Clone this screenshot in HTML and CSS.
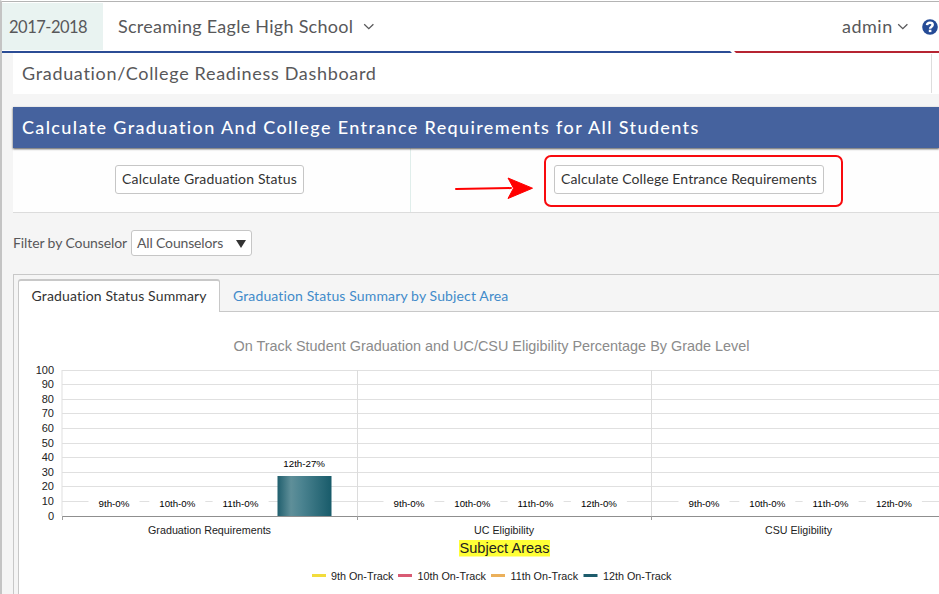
FILE: index.html
```
<!DOCTYPE html>
<html lang="en">
<head>
<meta charset="utf-8">
<title>Graduation/College Readiness Dashboard</title>
<link rel="stylesheet" href="styles.css">
</head>
<body>
<div class="app">
  <header class="topbar">
    <div class="year">2017-2018</div>
    <div class="school">Screaming Eagle High School</div>
    <svg class="chev" width="12" height="8" viewBox="0 0 12 8"><path d="M1.2 1.2 5.8 5.7 10.4 1.2"/></svg>
    <div class="user">admin</div>
    <svg class="chev user-chev" width="12" height="8" viewBox="0 0 12 8"><path d="M1.2 1.2 5.8 5.7 10.4 1.2"/></svg>
    <svg class="help" width="16" height="16" viewBox="0 0 16 16"><circle cx="8" cy="8" r="7.8" fill="#254b96"/><path d="M5 6.2C5.2 4.3 6.4 3.7 8 3.7c1.6 0 2.7.8 2.7 2.1C10.7 7.7 8.1 7.6 8.1 9.7" fill="none" stroke="#fff" stroke-width="2.5"/><rect x="6.8" y="10.7" width="2.6" height="2.4" fill="#fff"/></svg>
  </header>
  <div class="stripe"><i class="blue"></i><i class="red"></i></div>
  <main class="page">
    <div class="titlebar"><h1>Graduation/College Readiness Dashboard</h1><div class="side"></div></div>
    <h2 class="banner">Calculate Graduation And College Entrance Requirements for All Students</h2>
    <div class="actions">
      <div class="cell first"><button class="btn status">Calculate Graduation Status</button></div>
      <div class="cell second">
        <svg class="arrow" width="80" height="24" viewBox="0 0 80 24"><path d="M1 12.9 56 12.1" stroke="#f00" stroke-width="2" stroke-linecap="round"/><path d="M53 2 77.5 12.2 53 22.5 58.5 12.2Z" fill="#f00" stroke="#f00" stroke-linejoin="round"/></svg>
        <div class="callout"><button class="btn college">Calculate College Entrance Requirements</button></div>
      </div>
    </div>
    <div class="filter"><span class="filter-label">Filter by Counselor</span><div class="select"><span>All Counselors</span><i class="caret"></i></div></div>
    <section class="tabs">
      <nav class="tablist"><a class="tab active">Graduation Status Summary</a><a class="tab link">Graduation Status Summary by Subject Area</a></nav>
      <div class="panel"><svg id="chart" class="chart" width="920" height="282" viewBox="19 312 920 282"></svg></div>
    </section>
  </main>
</div>
<script src="chart.js"></script>
</body>
</html>
```
FILE: chart.js
```
const svg = document.getElementById("chart");
const NS = "http://www.w3.org/2000/svg";

function add(tag, attrs, text) {
  const el = document.createElementNS(NS, tag);
  for (const key in attrs) el.setAttribute(key, attrs[key]);
  if (text) el.textContent = text;
  svg.appendChild(el);
  return el;
}

// Text fitted to a horizontal span
function label(text, x1, x2, y, cls) {
  add("text", { x: x1, y: y, textLength: x2 - x1, lengthAdjust: "spacingAndGlyphs", class: cls }, text);
}

function line(x, y, w, h, fill) {
  add("rect", { x: x, y: y, width: w, height: h, fill: fill });
}

const defs = add("defs", {});
defs.innerHTML = '<linearGradient id="bar"><stop offset="0" stop-color="#205f6e"/><stop offset=".25" stop-color="#5f8f99"/><stop offset=".45" stop-color="#4b8390"/><stop offset="1" stop-color="#185b6a"/></linearGradient>';

label("On Track Student Graduation and UC/CSU Eligibility Percentage By Grade Level", 233.5, 749.5, 351, "title");

const rows = [370, 384, 399, 413, 428, 443, 457, 472, 486, 501];
rows.forEach((y, i) => {
  line(62, y, 877, 1, "#e0e0e0");
  add("text", { x: 54, y: y + 4, class: "axis end" }, String(100 - i * 10));
});
add("text", { x: 54, y: 520, class: "axis end" }, "0");

line(61.5, 370, 1, 146, "#e0e0e0");
[357, 651].forEach(x => line(x, 370, 1, 146, "#dcdcdc"));

[62, 357, 652].forEach((left, g) => {
  ["9th", "10th", "11th", "12th"].forEach((grade, i) => {
    const cx = left + 52 + i * 63.3;
    const half = i === 0 ? 15.5 : 18;
    if (g === 0 && i === 3) {
      line(278, 458, 52, 11, "#fff");
      add("rect", { x: 277.5, y: 476, width: 54, height: 40, fill: "url(#bar)" });
      label("12th-27%", 283.3, 325, 467, "data");
    } else {
      line(cx - half - 10, 498, half * 2 + 20, 10, "#fff");
      label(grade + "-0%", cx - half, cx + half, 507, "data");
    }
  });
});

line(62, 516, 877, 1, "#8f8f8f");
[62, 357, 651].forEach(x => line(x, 516, 1, 4, "#a0a0a0"));

label("Graduation Requirements", 148, 271, 534, "axis");
label("UC Eligibility", 474, 534, 534, "axis");
label("CSU Eligibility", 765, 832, 534, "axis");

add("rect", { x: 459, y: 540, width: 91, height: 16.5, fill: "#ffff36" });
label("Subject Areas", 459.5, 549.5, 553, "subject");

[["#f2dc3c", 312, "9th On-Track", 331, 393.5],
 ["#d95b74", 398, "10th On-Track", 417.5, 486],
 ["#ebb05b", 491, "11th On-Track", 510.5, 578],
 ["#1d5c6c", 583.5, "12th On-Track", 603, 671.5]].forEach(([color, x, text, a, b]) => {
  line(x, 574, 14, 3, color);
  label(text, a, b, 580, "axis");
});
```
FILE: styles.css
```
* { box-sizing: border-box; }
body { margin: 0; background: #f5f5f5; font-family: Lato, "Open Sans", sans-serif; color: #58585a; overflow: hidden; }
.app { height: 594px; border-left: 2px solid #c4c4c4; border-top: 1px solid #fff; overflow: hidden; }
.topbar { height: 50px; border-top: 1px solid #b4b4b4; background: #fff; display: flex; align-items: center; font-size: 18px; white-space: nowrap; }
.year { width: 101px; height: 47px; line-height: 48px; padding-left: 7px; background: #e9f3f1; font-size: 16.5px; letter-spacing: -.5px; align-self: flex-start; margin-top: 1px; }
.school { margin-left: 15px; width: 245px; padding-bottom: 2px; letter-spacing: .27px; }
.chev { fill: none; stroke: #58585a; stroke-width: 1.3; flex: none; }
.user { margin-left: 467px; width: 54px; padding-bottom: 2px; letter-spacing: .5px; }
.user-chev { margin-left: 1px; }
.help { margin-left: 13px; flex: none; }
.stripe { height: 2px; background: #fff; display: flex; gap: 2px; }
.blue { width: 730px; background: #2b4c95; clip-path: polygon(0 0, 728px 0, 100% 100%, 0 100%); }
.red { flex: 1; background: #b62431; clip-path: polygon(0 0, 100% 0, 100% 100%, 2px 100%); }
.page { padding-left: 11px; }
.titlebar { height: 41px; background: #fff; display: flex; }
h1 { margin: 0; padding-left: 9px; width: 918px; font-size: 18px; font-weight: 400; line-height: 41px; letter-spacing: .68px; }
.side { height: 39px; margin-top: 1px; border-left: 1px solid #ddd; }
.banner { position: relative; margin: 13px 0 0; height: 41px; padding-left: 9px; background: #45629e; color: #fff; font-size: 18px; font-weight: 500; line-height: 40px; letter-spacing: 1.36px; white-space: nowrap; box-shadow: 0 1px 2px #555; }
.actions { height: 65px; background: #fefefe; border-bottom: 1px solid #dcdcdc; display: flex; }
.cell { padding-top: 17px; }
.first { width: 398px; border-right: 1px solid #e0eeeb; padding-left: 102px; }
.second { display: flex; padding: 7px 0 0 44px; }
.btn { display: block; height: 29px; padding: 0 0 2px; border: 1px solid #c6c6c6; border-radius: 3px; background: #fff; color: #333; font: 14px/25px Lato, sans-serif; text-align: center; white-space: nowrap; }
.status { width: 189px; letter-spacing: .16px; }
.college { width: 270px; letter-spacing: .1px; }
.arrow { margin: 21px 9px 0 0; }
.callout { width: 299px; height: 52px; border: 2px solid #f80a0e; border-radius: 7px; padding: 8px 0 0 8px; }
.filter { height: 61px; padding-top: 17px; display: flex; font-size: 14px; line-height: 26px; white-space: nowrap; }
.filter-label { width: 118px; letter-spacing: -.1px; }
.select { width: 121px; height: 26px; border: 1px solid #c6c6c6; border-radius: 3px; background: #fff; padding: 0 5px; line-height: 24px; letter-spacing: -.15px; display: flex; justify-content: space-between; }
.caret { margin-top: 9px; height: 0; border: 5px solid transparent; border-top: 8px solid #333; border-bottom: 0; }
.tabs { border: solid #c8c8c8; border-width: 1px 0 0 1px; padding: 4px 0 0 4px; height: 321px; background: #f5f5f5; }
.tablist { display: flex; height: 33px; border-bottom: 1px solid #c8c8c8; font-size: 14px; line-height: 33px; white-space: nowrap; }
.tab { height: 33px; }
.active { width: 202px; padding-left: 12.5px; background: #fff; border: 1px solid #c8c8c8; border-top-width: 2px; border-bottom: 0; border-radius: 3px 3px 0 0; color: #333; letter-spacing: .15px; line-height: 30px; }
.link { margin-left: 13px; color: #428bca; letter-spacing: .13px; line-height: 33px; }
.panel { border-left: 1px solid #c8c8c8; background: #fff; height: 283px; }
.chart { display: block; font-family: "Liberation Sans", Arial, sans-serif; }
.chart text { fill: #222; }
.chart .title { font-size: 14.5px; fill: #8b8b8b; }
.chart .axis { font-size: 11px; }
.chart .end { text-anchor: end; }
.chart .data { font-size: 9.6px; fill: #000; }
.chart .subject { font-size: 14.3px; }
```
